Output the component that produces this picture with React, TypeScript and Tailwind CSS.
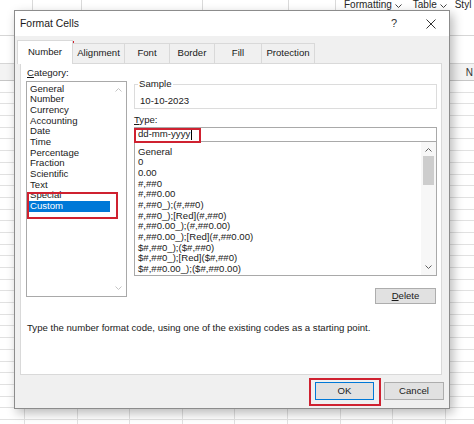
import React from 'react';

const categories = ['General', 'Number', 'Currency', 'Accounting', 'Date', 'Time', 'Percentage', 'Fraction', 'Scientific', 'Text', 'Special', 'Custom'];

const formats = [
  'General',
  '0',
  '0.00',
  '#,##0',
  '#,##0.00',
  '#,##0_);(#,##0)',
  '#,##0_);[Red](#,##0)',
  '#,##0.00_);(#,##0.00)',
  '#,##0.00_);[Red](#,##0.00)',
  '$#,##0_);($#,##0)',
  '$#,##0_);[Red]($#,##0)',
  '$#,##0.00_);($#,##0.00)',
];

const tabs = [
  { label: 'Number', w: 'w-[56px]' },
  { label: 'Alignment', w: 'w-[52px]' },
  { label: 'Font', w: 'w-[45px]' },
  { label: 'Border', w: 'w-[45px]' },
  { label: 'Fill', w: 'w-[47px]' },
  { label: 'Protection', w: 'w-[53px]' },
];

function Chevron({ up, color = '#606060' }: { up?: boolean; color?: string }) {
  return (
    <svg width="7" height="4" viewBox="0 0 7 4" className="block">
      <path d={up ? 'M0.5 3.5 L3.5 0.5 L6.5 3.5' : 'M0.5 0.5 L3.5 3.5 L6.5 0.5'} fill="none" stroke={color} strokeWidth="1" />
    </svg>
  );
}

function SheetBackground() {
  const rows = Array.from({ length: 30 });
  const cols = Array.from({ length: 10 });
  return (
    <div className="flex flex-col">
      {/* ribbon */}
      <div className="h-[36px] border-b border-[#d6d6d6] bg-white flex items-start">
        <div className="h-[12px] w-full flex items-start">
          <div className="w-[33px] h-[12px] border-r border-[#dadada]" />
          <div className="w-[49px] h-[12px] border-r border-[#dadada]" />
          <div className="w-[121px] h-[12px] border-r border-[#dadada]" />
          <div className="w-[86px] h-[12px] border-r border-[#dadada]" />
          <div className="w-[47px] h-[12px] border-r border-[#dadada]" />
          <div className="flex items-start gap-[3px] ml-[8px] text-[10px] leading-[10px] text-[#262626]">
            <span>Formatting</span>
            <span className="mt-[4px]"><Chevron color="#444" /></span>
            <span className="ml-[8px]">Table</span>
            <span className="mt-[4px]"><Chevron color="#444" /></span>
            <span className="ml-[5px]">Styl</span>
          </div>
        </div>
      </div>
      {/* formula bar area */}
      <div className="h-[28px] border-b border-[#d6d6d6] bg-white" />
      {/* column headers */}
      <div className="h-[17px] bg-[#f3f3f3] border-b border-[#c6c6c6] flex justify-end items-center text-[10px] text-[#333]">
        <span className="mr-[1px]">N</span>
      </div>
      {rows.map((_, r) => (
        <div key={r} className="flex h-[11.7px] shrink-0">
          <div className="w-[25px] shrink-0 border-r border-b border-[#e1e1e1]" />
          {cols.map((__, c) => (
            <div key={c} className="w-[52.6px] shrink-0 border-r border-b border-[#e1e1e1]" />
          ))}
        </div>
      ))}
    </div>
  );
}

function RedBox({ cls }: { cls: string }) {
  return <div className={`absolute border-2 border-[#cf2130] pointer-events-none ${cls}`} />;
}

export default function App() {
  return (
    <div className="relative w-[474px] h-[424px] overflow-hidden bg-white font-['Liberation_Sans',Arial,sans-serif] text-[9.6px] text-[#1a1a1a]">
      <SheetBackground />

      {/* Format Cells dialog */}
      <div className="absolute left-[14px] top-[10px] w-[436px] h-[399px] border border-[#8c8c8c] bg-[#f0f0f0] shadow-[3px_4px_10px_rgba(0,0,0,0.28)] flex flex-col">
        {/* title bar */}
        <div className="h-[25px] bg-white flex items-center pl-[5px] shrink-0">
          <span className="text-[10.4px]">Format Cells</span>
          <span className="ml-auto text-[11px] text-[#333] mr-[29px]">?</span>
          <svg width="10" height="10" viewBox="0 0 10 10" className="mr-[13px]">
            <path d="M0.5 0.5 L9.5 9.5 M9.5 0.5 L0.5 9.5" stroke="#333" strokeWidth="1" />
          </svg>
        </div>

        {/* tabs */}
        <div className="h-[28px] pt-[4px] pl-[2px] flex items-end shrink-0 relative z-10 -mb-[1px]">
          {tabs.map((t, i) =>
            i === 0 ? (
              <div key={t.label} className={`${t.w} h-[24px] bg-white border border-b-0 border-[#d9d9d9] flex items-center justify-center pb-[1px]`}>
                {t.label}
              </div>
            ) : (
              <div key={t.label} className={`${t.w} h-[21px] bg-[#f0f0f0] border border-l-0 border-[#d9d9d9] flex items-center justify-center`}>
                {t.label}
              </div>
            )
          )}
        </div>

        {/* tab page */}
        <div className="ml-[5px] w-[422px] h-[312px] bg-white border border-[#d9d9d9] shrink-0 flex flex-col">
          <div className="flex">
            {/* category column */}
            <div className="ml-[5px] w-[101px] flex flex-col">
              <div className="h-[14px] mt-[2px] flex items-center pl-[1px]">
                <span><span className="underline">C</span>ategory:</span>
              </div>
              <div className="mt-[1px] h-[216px] border border-[#a9a9a9] flex">
                <div className="flex-1 pt-[1.5px] pl-[1px]">
                  {categories.map((c) => (
                    <div
                      key={c}
                      className={`h-[10.7px] leading-[10.7px] pl-[2px] ${c === 'Custom' ? 'bg-[#0078d7] text-white' : ''}`}
                    >
                      {c}
                    </div>
                  ))}
                </div>
                <div className="w-[16px] flex flex-col items-center justify-between py-[6px]">
                  <Chevron up color="#c4c4c4" />
                  <Chevron color="#c4c4c4" />
                </div>
              </div>
            </div>

            {/* right column */}
            <div className="ml-[7px] w-[303px] flex flex-col">
              <div className="relative mt-[20px] h-[25px] border border-[#dcdcdc]">
                <span className="absolute -top-[7px] left-[3px] bg-white px-[1px] leading-[12px]">Sample</span>
                <div className="pl-[5px] pt-[10px] leading-[12px]">10-10-2023</div>
              </div>
              <div className="h-[13px] mt-[5px] flex items-center">
                <span><span className="underline">T</span>ype:</span>
              </div>
              <div className="h-[15px] border border-[#a9a9a9] flex items-center pl-[3px]">
                <span>dd-mm-yyyy</span>
                <span className="w-[1px] h-[10px] bg-[#000] ml-[0.5px]" />
              </div>
              <div className="h-[134px] border border-t-0 border-[#a9a9a9] flex">
                <div className="flex-1 pt-[4.5px] pl-[3px] overflow-hidden">
                  {formats.map((f, i) => (
                    <div key={i} className="h-[10.7px] leading-[10.7px] whitespace-nowrap">
                      {f}
                    </div>
                  ))}
                </div>
                <div className="w-[15px] bg-[#f7f7f7] flex flex-col items-center pt-[6px] pb-[6px]">
                  <Chevron up />
                  <div className="mt-[4px] w-[11px] h-[29px] bg-[#cdcdcd]" />
                  <div className="mt-auto">
                    <Chevron />
                  </div>
                </div>
              </div>
              <div className="mt-[12px] self-end mr-[1px] w-[61px] h-[16px] bg-[#e1e1e1] border border-[#adadad] flex items-center justify-center">
                <span><span className="underline">D</span>elete</span>
              </div>
            </div>
          </div>
          <div className="mt-[18px] h-[12px] ml-[6px] flex items-center">
            Type the number format code, using one of the existing codes as a starting point.
          </div>
        </div>

        {/* buttons */}
        <div className="mt-[7px] flex justify-end gap-[10px] pr-[5px]">
          <div className="w-[59px] h-[18px] bg-[#e1e1e1] border border-[#0078d7] flex items-center justify-center">OK</div>
          <div className="w-[60px] h-[18px] bg-[#e1e1e1] border border-[#adadad] flex items-center justify-center">Cancel</div>
        </div>

        {/* highlight boxes */}
        <RedBox cls="left-[2px] top-[30px] w-[57px] h-[23px]" />
        <RedBox cls="left-[12px] top-[181px] w-[91px] h-[27px]" />
        <RedBox cls="left-[119px] top-[117px] w-[67px] h-[15px]" />
        <RedBox cls="left-[294px] top-[367px] w-[72px] h-[28px]" />
      </div>
    </div>
  );
}
